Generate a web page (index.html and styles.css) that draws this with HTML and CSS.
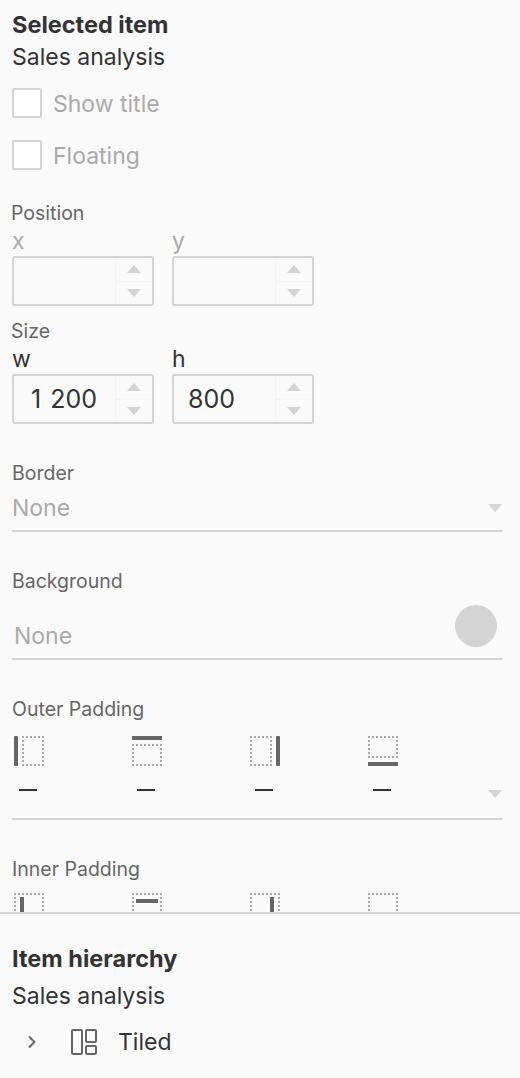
FILE: index.html
```html
<!DOCTYPE html>
<html lang="en">
<head>
  <meta charset="UTF-8">
  <meta name="viewport" content="width=device-width, initial-scale=1.0">
  <title>Selected item</title>
  <link rel="stylesheet" href="styles.css">
</head>
<body>
  <div class="panel">
    <div class="props">
      <h2 class="title">Selected item</h2>
      <div class="name">Sales analysis</div>

      <label class="check"><span class="box"></span>Show title</label>
      <label class="check check-2"><span class="box"></span>Floating</label>

      <div class="group-label pos-label">Position</div>
      <div class="fields">
        <div class="field disabled">
          <div class="field-label">x</div>
          <div class="spin"><span class="spin-value"></span><span class="spin-btns"><i class="up"></i><i class="down"></i></span></div>
        </div>
        <div class="field disabled">
          <div class="field-label">y</div>
          <div class="spin"><span class="spin-value"></span><span class="spin-btns"><i class="up"></i><i class="down"></i></span></div>
        </div>
      </div>

      <div class="group-label size-label">Size</div>
      <div class="fields">
        <div class="field">
          <div class="field-label">w</div>
          <div class="spin"><span class="spin-value">1 200</span><span class="spin-btns"><i class="up"></i><i class="down"></i></span></div>
        </div>
        <div class="field">
          <div class="field-label">h</div>
          <div class="spin"><span class="spin-value val-h">800</span><span class="spin-btns"><i class="up"></i><i class="down"></i></span></div>
        </div>
      </div>

      <div class="group-label border-label">Border</div>
      <div class="select">
        <span class="muted">None</span>
        <span class="caret"></span>
      </div>

      <div class="group-label bg-label">Background</div>
      <div class="select select-bg">
        <span class="muted">None</span>
        <span class="swatch"></span>
      </div>

      <div class="group-label outer-label">Outer Padding</div>
      <div class="select select-pad">
        <div class="pad-item">
          <svg class="pad-icon" viewBox="0 0 30 30"><rect x="9" y="1" width="20" height="28" class="dots"/><rect width="4" height="30" rx="1" class="bar"/></svg>
          <span class="dash"></span>
        </div>
        <div class="pad-item">
          <svg class="pad-icon" viewBox="0 0 30 30"><rect x="1" y="9" width="28" height="20" class="dots"/><rect width="30" height="4" class="bar"/></svg>
          <span class="dash"></span>
        </div>
        <div class="pad-item">
          <svg class="pad-icon" viewBox="0 0 30 30"><rect x="1" y="1" width="20" height="28" class="dots"/><rect x="26" width="4" height="30" rx="1" class="bar"/></svg>
          <span class="dash"></span>
        </div>
        <div class="pad-item">
          <svg class="pad-icon" viewBox="0 0 30 30"><rect x="1" y="1" width="28" height="20" class="dots"/><rect y="26" width="30" height="4" class="bar"/></svg>
          <span class="dash"></span>
        </div>
        <span class="caret caret-pad"></span>
      </div>

      <div class="group-label inner-label">Inner Padding</div>
      <div class="pad-row">
        <svg class="pad-icon" viewBox="0 0 30 30"><rect x="1" y="1" width="28" height="28" class="dots"/><rect x="6" y="4" width="4" height="22" class="bar"/></svg>
        <svg class="pad-icon" viewBox="0 0 30 30"><rect x="1" y="1" width="28" height="28" class="dots"/><rect x="4" y="6" width="22" height="4" class="bar"/></svg>
        <svg class="pad-icon" viewBox="0 0 30 30"><rect x="1" y="1" width="28" height="28" class="dots"/><rect x="20" y="4" width="4" height="22" class="bar"/></svg>
        <svg class="pad-icon" viewBox="0 0 30 30"><rect x="1" y="1" width="28" height="28" class="dots"/></svg>
      </div>
    </div>

    <div class="hierarchy">
      <h2 class="title">Item hierarchy</h2>
      <div class="name">Sales analysis</div>
      <div class="tree-row">
        <svg class="chevron" width="10" height="14" viewBox="0 0 10 14"><path d="M2 1.5 7.5 7 2 12.5" fill="none" stroke="#666" stroke-width="2"/></svg>
        <svg class="tiled" width="26" height="26" viewBox="0 0 26 26">
          <rect x="1" y="1" width="10" height="24" rx="1"/>
          <rect x="15" y="1" width="10" height="12" rx="1"/>
          <rect x="15" y="17" width="10" height="8" rx="1"/>
        </svg>
        <span>Tiled</span>
      </div>
    </div>
  </div>
</body>
</html>
```

FILE: styles.css
```css
* {
  box-sizing: border-box;
}

body {
  margin: 0;
  background-color: #fafafa;
  color: #333;
  font-family: Inter, Roboto, sans-serif;
}

.panel {
  display: flex;
  flex-direction: column;
  height: 1078px;
  overflow: hidden;
}

.props {
  height: 914px;
  padding: 9px 18px 0 12px;
  overflow: hidden;
  border-bottom: 2px solid #d4d4d4;
}

.title {
  margin: 0;
  font-size: 23.5px;
  font-weight: 700;
  line-height: 32px;
}

.name {
  font-size: 23px;
  line-height: 32px;
}

.check {
  display: flex;
  align-items: flex-start;
  gap: 11px;
  height: 30px;
  margin-top: 15px;
  color: #aaa;
  font-size: 23px;
  line-height: 32px;
}

.check-2 {
  margin-top: 22px;
}

.box {
  width: 30px;
  height: 30px;
  background: #fff;
  border: 2px solid #d4d4d4;
  border-radius: 2px;
}

.group-label {
  height: 26px;
  color: #666;
  font-size: 19.5px;
  line-height: 26px;
}

.pos-label {
  margin-top: 30px;
  margin-left: -1px;
}

.size-label {
  margin-top: 12px;
  margin-left: -1px;
}

.border-label,
.bg-label,
.outer-label,
.inner-label {
  margin-top: 36px;
}

.fields {
  display: flex;
  gap: 18px;
}

.field {
  width: 142px;
}

.field-label {
  height: 30px;
  font-size: 23px;
  line-height: 30px;
}

.disabled .field-label {
  color: #aaa;
}

.spin {
  display: flex;
  height: 50px;
  border: 2px solid #d4d4d4;
  border-radius: 3px;
}

.spin-value {
  flex: 1;
  padding-left: 17px;
  font-size: 25px;
  line-height: 46px;
  word-spacing: 2px;
}

.spin-value.val-h {
  padding-left: 14px;
}

.spin-btns {
  display: flex;
  flex-direction: column;
  width: 37px;
  border-left: 1px solid #f4f4f4;
}

.spin-btns i {
  display: flex;
  flex: 1;
  align-items: center;
  justify-content: center;
}

.spin-btns .up {
  border-bottom: 1px solid #f4f4f4;
}

.spin-btns .up::after,
.spin-btns .down::after {
  content: '';
  border-left: 7px solid transparent;
  border-right: 7px solid transparent;
}

.spin-btns .up::after {
  border-bottom: 8px solid #d4d4d4;
}

.spin-btns .down::after {
  border-top: 8px solid #d4d4d4;
}

.select {
  display: flex;
  align-items: center;
  justify-content: space-between;
  height: 46px;
  border-bottom: 2px solid #d4d4d4;
  font-size: 23px;
}

.muted {
  color: #aaa;
}

.caret {
  border-left: 7px solid transparent;
  border-right: 7px solid transparent;
  border-top: 8px solid #d4d4d4;
}

.select-bg {
  height: 66px;
  padding: 0 5px 0 2px;
}

.select-bg .muted {
  margin-top: 20px;
}

.swatch {
  width: 42px;
  height: 42px;
  background: #d4d4d4;
  border-radius: 50%;
}

.select-pad {
  position: relative;
  display: grid;
  grid-template-columns: repeat(4, 118px);
  align-items: start;
  justify-content: start;
  height: 98px;
  padding: 14px 0 0 2px;
}

.pad-item {
  display: flex;
  flex-direction: column;
}

.pad-icon {
  display: block;
  width: 30px;
  height: 30px;
}

.dots {
  fill: none;
  stroke: #aaa;
  stroke-width: 2;
  stroke-dasharray: 2 2;
  stroke-dashoffset: 1;
  shape-rendering: crispEdges;
}

.bar {
  fill: #666;
}

.dash {
  width: 18px;
  height: 2px;
  margin: 23px 0 0 5px;
  background: #333;
}

.caret-pad {
  position: absolute;
  top: 68px;
  right: 0;
}

.pad-row {
  display: grid;
  grid-template-columns: repeat(4, 118px);
  padding: 11px 0 0 2px;
}

.hierarchy {
  padding: 29px 12px 0;
}

.hierarchy .name {
  margin-top: 5px;
}

.tree-row {
  display: flex;
  align-items: center;
  height: 30px;
  margin-top: 15px;
  font-size: 23px;
}

.chevron {
  margin-left: 15px;
}

.tiled {
  margin: 0 21px 0 34px;
}

.tiled rect {
  fill: none;
  stroke: #666;
  stroke-width: 2;
}
```
